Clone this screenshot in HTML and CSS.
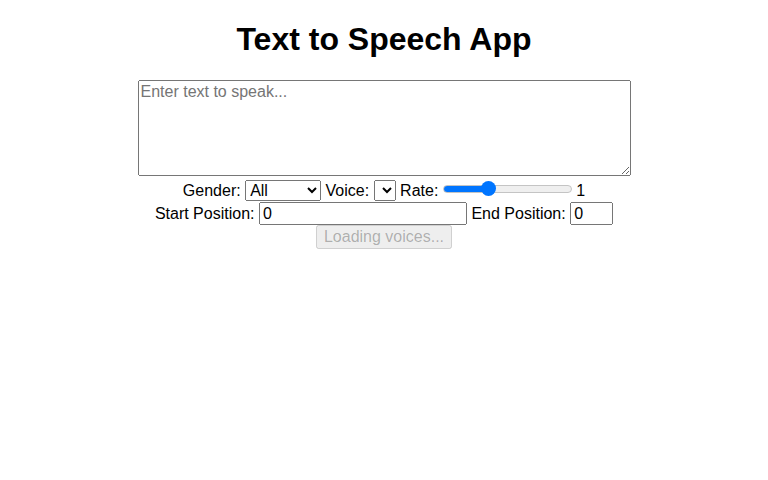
FILE: index.html
```html
<!DOCTYPE html>
<html>
<head>
<meta charset="utf-8">
<title>Text to Speech App</title>
<link rel="stylesheet" href="styles.css">
</head>
<body>
<div class="app">
  <h1 class="title">Text to Speech App</h1>
  <textarea class="text-input" placeholder="Enter text to speak..."></textarea>
  <div class="row">
    <label>Gender:</label>
    <select class="gender">
      <option>All</option>
      <option>Male</option>
      <option>Female</option>
    </select>
    <label>Voice:</label>
    <select class="voice"></select>
    <label>Rate:</label>
    <input class="rate" type="range" min="0.5" max="2" step="0.1" value="1" style="--fill: 36%">
    <span>1</span>
  </div>
  <div class="row">
    <label>Start Position:</label>
    <input class="start" type="number" value="0">
    <label>End Position:</label>
    <input class="end" type="number" value="0">
  </div>
  <div class="row">
    <button class="speak" disabled>Loading voices...</button>
  </div>
</div>
</body>
</html>
```

FILE: styles.css
```css
body {
  margin: 0;
  padding: 0 8px;
  font-family: "Liberation Sans", Arial, sans-serif;
  font-size: 16px;
  color: #000;
  background: #fff;
}

.app {
  text-align: center;
}

.title {
  font-size: 32px;
  margin: 21px 0 22px;
}

.text-input {
  display: block;
  box-sizing: border-box;
  width: 493px;
  height: 96px;
  margin: 0 auto 4px;
  font-family: "Liberation Sans", Arial, sans-serif;
  font-size: 16px;
  padding: 2px;
  resize: vertical;
}

.row {
  line-height: 22px;
}

select,
input,
button {
  font-family: "Liberation Sans", Arial, sans-serif;
  font-size: 16px;
}

.gender {
  width: 76px;
}

.voice {
  width: 22px;
}

/* rate slider: blue fill up to the thumb, light grey track after it */
.rate {
  -webkit-appearance: none;
  appearance: none;
  box-sizing: border-box;
  width: 129px;
  height: 8px;
  margin: 0;
  border-radius: 4px;
  border: 1px solid #c4c4c4;
  background: linear-gradient(to right, #0075ff 0 var(--fill), #efefef var(--fill));
  vertical-align: middle;
  position: relative;
  top: -3px;
}

.rate::-webkit-slider-thumb {
  -webkit-appearance: none;
  appearance: none;
  width: 15px;
  height: 15px;
  border-radius: 50%;
  background: #0075ff;
  border: none;
}

.start,
.end {
  -moz-appearance: textfield;
  appearance: textfield;
  box-sizing: border-box;
  height: 23px;
}

.start {
  width: 208px;
}

.end {
  width: 43px;
}

.start::-webkit-inner-spin-button,
.end::-webkit-inner-spin-button {
  -webkit-appearance: none;
}
```
